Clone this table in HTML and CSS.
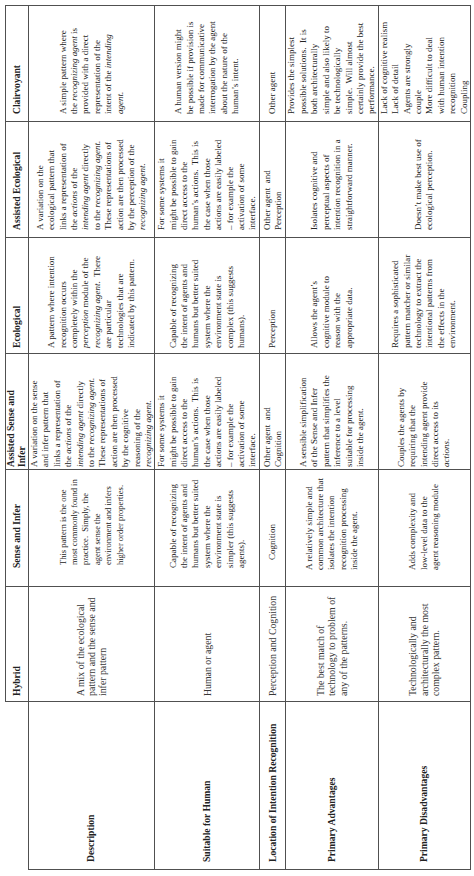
FILE: index.html
```html
<!DOCTYPE html>
<html lang="en">
<head>
<meta charset="utf-8">
<title>Intention recognition patterns</title>
<link rel="stylesheet" href="styles.css">
</head>
<body>
<div class="page">
  <div class="frame">
    <table class="grid">
      <colgroup>
        <col class="c-label"><col class="c-hyb"><col class="c-si"><col class="c-asi"><col class="c-eco"><col class="c-aeco"><col class="c-clair">
      </colgroup>
      <tr class="r-head">
        <td class="corner"></td>
        <th class="hyb">Hybrid</th>
        <th class="si">Sense and Infer</th>
        <th class="asi">Assisted Sense and<br>Infer</th>
        <th class="eco">Ecological</th>
        <th class="aeco">Assisted Ecological</th>
        <th class="clair">Clairvoyant</th>
      </tr>
      <tr class="r-desc">
        <th class="label">Description</th>
        <td class="hyb">A mix of the ecological<br>pattern and the sense and<br>infer pattern</td>
        <td class="si small">This pattern is the one<br>most commonly found in<br>practice.&nbsp; Simply, the<br>agent sense the<br>environment and infers<br>higher order properties.</td>
        <td class="asi">A variation on the sense<br>and infer pattern that<br>links a representation of<br>the <em>actions</em> of the<br><em>intending agent</em> directly<br>to the <em>recognizing agent.</em><br>These representations of<br>action are then processed<br>by the cognitive<br>reasoning of the<br><em>recognizing agent.</em></td>
        <td class="eco">A pattern where intention<br>recognition occurs<br>completely within the<br><em>perception</em> module of the<br><em>recognizing agent</em>.&nbsp; There<br>are particular<br>technologies that are<br>indicated by this pattern.</td>
        <td class="aeco">A variation on the<br>ecological pattern that<br>links a representation of<br>the <em>actions</em> of the<br><em>intending agent</em> directly<br>to the <em>recognizing agent.</em><br>These representations of<br>action are then processed<br>by the perception of the<br><em>recognizing agent.</em></td>
        <td class="clair">A simple pattern where<br>the <em>recognizing agent</em> is<br>provided with a direct<br>representation of the<br>intent of the <em>intending<br>agent.</em></td>
      </tr>
      <tr class="r-suit">
        <th class="label">Suitable for Human</th>
        <td class="hyb">Human or agent</td>
        <td class="si">Capable of recognizing<br>the intent of agents and<br>humans but better suited<br>system where the<br>environment state is<br>simpler (this suggests<br>agents).</td>
        <td class="asi">For some systems it<br>might be possible to gain<br>direct access to the<br>human’s actions.&nbsp; This is<br>the case when those<br>actions are easily labeled<br>– for example the<br>activation of some<br>interface.</td>
        <td class="eco">Capable of recognizing<br>the intent of agents and<br>humans but better suited<br>system where the<br>environment state is<br>complex (this suggests<br>humans).</td>
        <td class="aeco">For some systems it<br>might be possible to gain<br>direct access to the<br>human’s actions.&nbsp; This is<br>the case when those<br>actions are easily labeled<br>– for example the<br>activation of some<br>interface.</td>
        <td class="clair">A human version might<br>be possible if provision is<br>made for communicative<br>interrogation by the agent<br>about the nature of the<br>human’s intent.</td>
      </tr>
      <tr class="r-loc">
        <th class="label">Location of Intention Recognition</th>
        <td class="hyb">Perception and Cognition</td>
        <td class="si loc-si">Cognition</td>
        <td class="asi">Other agent&nbsp; and<br>Cognition</td>
        <td class="eco">Perception</td>
        <td class="aeco">Other agent&nbsp; and<br>Perception</td>
        <td class="clair">Other agent</td>
      </tr>
      <tr class="r-adv">
        <th class="label">Primary Advantages</th>
        <td class="hyb">The best match of<br>technology to problem of<br>any of the patterns.</td>
        <td class="si si-low">A relatively simple and<br>common architecture that<br>isolates the intention<br>recognition processing<br>inside the agent.</td>
        <td class="asi">A sensible simplification<br>of the Sense and Infer<br>pattern that simplifies the<br>inference to a level<br>suitable for processing<br>inside the agent.</td>
        <td class="eco">Allows the agent’s<br>cognitive module to<br>reason with the<br>appropriate data.</td>
        <td class="aeco">Isolates cognitive and<br>perceptual aspects of<br>intention recognition in a<br>straightforward manner.</td>
        <td class="clair">Provides the simplest<br>possible solutions.&nbsp; It is<br>both architecturally<br>simple and also likely to<br>be technologically<br>simple.&nbsp; Will almost<br>certainly provide the best<br>performance.</td>
      </tr>
      <tr class="r-dis">
        <th class="label">Primary Disadvantages</th>
        <td class="hyb">Technologically and<br>architecturally the most<br>complex pattern.</td>
        <td class="si si-low">Adds complexity and<br>low-level data to the<br>agent reasoning module</td>
        <td class="asi">Couples the agents by<br>requiring that the<br>intending agent provide<br>direct access to its<br><em>actions</em>.</td>
        <td class="eco">Requires a sophisticated<br>pattern matcher or similar<br>technology to extract the<br>intentional patterns from<br>the effects in the<br>environment.</td>
        <td class="aeco">Doesn’t make best use of<br>ecological perception.</td>
        <td class="clair">Lack of cognitive realism<br>Lack of detail<br>Agents are strongly<br>couple<br>More difficult to deal<br>with human intention<br>recognition<br>Coupling</td>
      </tr>
    </table>
  </div>
</div>
</body>
</html>
```

FILE: styles.css
```css
html, body {
  margin: 0;
  background: #ffffff;
}

.page {
  padding: 6px 0 0 5px;
}

.frame {
  width: 463px;
  height: 864px;
}

.grid {
  width: 864px;
  height: 463px;
  border-collapse: collapse;
  table-layout: fixed;
  transform-origin: 0 0;
  transform: translateY(864px) rotate(-90deg);
  font-family: "Liberation Serif", "Times New Roman", serif;
  font-size: 9px;
  line-height: 11.4px;
  color: #222222;
}

.c-label { width: 168px; }
.c-hyb { width: 115px; }
.c-si { width: 117px; }
.c-asi { width: 116px; }
.c-eco { width: 116px; }
.c-aeco { width: 116px; }
.c-clair { width: 116px; }

.r-head { height: 23px; }
.r-desc { height: 126px; }
.r-suit { height: 105px; }
.r-loc { height: 26px; }
.r-adv { height: 91px; }
.r-dis { height: 92px; }

.grid td,
.grid th {
  border: 1px solid #505050;
  padding: 0 2px 0 6px;
  vertical-align: middle;
  text-align: left;
  white-space: nowrap;
  overflow: hidden;
  font-weight: normal;
}

.grid th {
  font-weight: bold;
  font-size: 9.6px;
  line-height: 10.6px;
}

.grid td.corner {
  border-top: none;
  border-left: none;
}

.grid th.label {
  padding-left: 7px;
}

.grid em {
  font-style: italic;
}

.grid .hyb {
  padding-left: 5px;
}

.grid td.hyb {
  font-size: 9.8px;
  color: #383838;
}

.grid .si {
  padding-left: 18px;
}

.grid td.small {
  font-size: 8.5px;
  padding-left: 21px;
}

.grid td.si-low {
  padding-left: 16px;
}

.grid td.loc-si {
  padding-left: 26px;
}

.grid .asi {
  padding-left: 2px;
}

.grid .eco {
  padding-left: 5px;
}

.grid .aeco {
  padding-left: 7px;
}

.grid .clair {
  padding-left: 7px;
}
```
